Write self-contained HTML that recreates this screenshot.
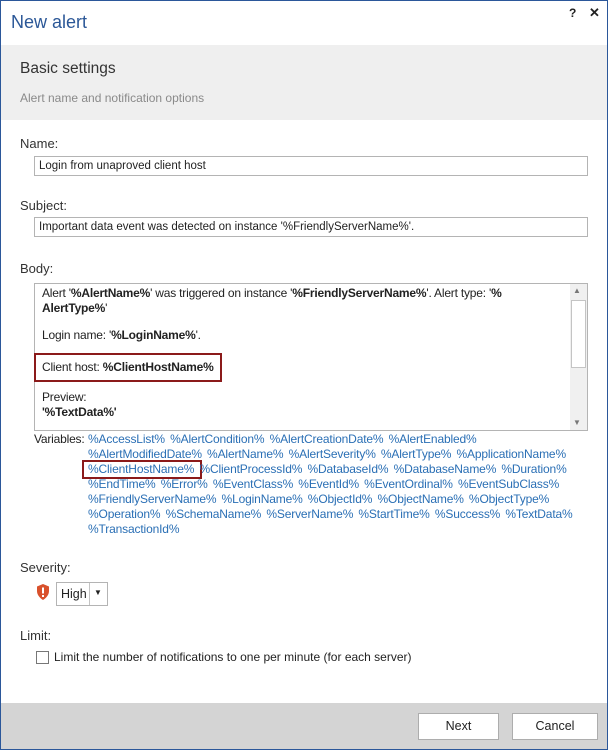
<!DOCTYPE html>
<html><head><meta charset="utf-8"><style>
*{margin:0;padding:0;box-sizing:border-box}
body{width:608px;height:750px;font-family:"Liberation Sans",sans-serif;font-size:12px;color:#222;background:#fff;position:relative;overflow:hidden}
.win{position:absolute;left:0;top:0;width:608px;height:750px;border:1px solid #2b579a}
.a{position:absolute;white-space:nowrap}
.lbl{font-size:13px;color:#333}
.inp{position:absolute;left:34px;width:554px;height:20px;border:1px solid #b4b4b4;padding:3px 4px;font-size:11.5px}
.lk{color:#2a6fb5}
.vl{position:absolute;left:88px;font-size:12px;letter-spacing:-0.15px;word-spacing:2px}
.bt{font-size:12px;letter-spacing:-0.2px}
.btn{position:absolute;top:713px;height:27px;border:1px solid #adadad;background:#fff;text-align:center;line-height:25px;font-size:12.5px}
</style></head><body>
<div class="win"></div>
<div class="a" style="left:11px;top:12px;font-size:18px;color:#2b5797">New alert</div>
<div class="a" style="left:569px;top:6px;font-size:12px;font-weight:bold">?</div>
<div class="a" style="left:589px;top:5px;font-size:13px;font-weight:bold">✕</div>
<div class="a" style="left:1px;top:45px;width:606px;height:75px;background:#efefef"></div>
<div class="a" style="left:20px;top:60px;font-size:15.5px;color:#333">Basic settings</div>
<div class="a" style="left:20px;top:91px;font-size:12px;color:#8a8a8a">Alert name and notification options</div>
<div class="a lbl" style="left:20px;top:136px">Name:</div>
<div class="inp" style="top:156px">Login from unaproved client host</div>
<div class="a lbl" style="left:20px;top:198px">Subject:</div>
<div class="inp" style="top:217px">Important data event was detected on instance '%FriendlyServerName%'.</div>
<div class="a lbl" style="left:20px;top:261px">Body:</div>
<div class="a" style="left:34px;top:283px;width:554px;height:148px;border:1px solid #b4b4b4"></div>
<div class="a" style="left:570px;top:284px;width:17px;height:146px;background:#f0f0f0"></div>
<div class="a" style="left:571px;top:300px;width:15px;height:68px;background:#fff;border:1px solid #c4c4c4"></div>
<div class="a" style="left:573px;top:286px;font-size:8px;color:#777">▲</div>
<div class="a" style="left:573px;top:418px;font-size:8px;color:#777">▼</div>
<div class="a bt" style="left:42px;top:286px;line-height:15px">Alert '<b>%AlertName%</b>' was triggered on instance '<b>%FriendlyServerName%</b>'. Alert type: '<b>%</b><br><b>AlertType%</b>'</div>
<div class="a bt" style="left:42px;top:328px">Login name: '<b>%LoginName%</b>'.</div>
<div class="a" style="left:34px;top:353px;width:188px;height:29px;border:2px solid #8b1a1a"></div>
<div class="a bt" style="left:42px;top:360px">Client host: <b>%ClientHostName%</b></div>
<div class="a bt" style="left:42px;top:390px;line-height:15px">Preview:<br><b>'%TextData%'</b></div>
<div class="a" style="left:34px;top:432px;font-size:12px;letter-spacing:-0.2px">Variables:</div>
<div class="vl lk" style="top:432px">%AccessList% %AlertCondition% %AlertCreationDate% %AlertEnabled%</div>
<div class="vl lk" style="top:447px">%AlertModifiedDate% %AlertName% %AlertSeverity% %AlertType% %ApplicationName%</div>
<div class="a" style="left:82px;top:460px;width:120px;height:19px;border:2px solid #8b1a1a"></div>
<div class="vl lk" style="top:462px">%ClientHostName% %ClientProcessId% %DatabaseId% %DatabaseName% %Duration%</div>
<div class="vl lk" style="top:477px">%EndTime% %Error% %EventClass% %EventId% %EventOrdinal% %EventSubClass%</div>
<div class="vl lk" style="top:492px">%FriendlyServerName% %LoginName% %ObjectId% %ObjectName% %ObjectType%</div>
<div class="vl lk" style="top:507px">%Operation% %SchemaName% %ServerName% %StartTime% %Success% %TextData%</div>
<div class="vl lk" style="top:522px">%TransactionId%</div>
<div class="a lbl" style="left:20px;top:560px">Severity:</div>
<svg class="a" style="left:36px;top:584px" width="14" height="16" viewBox="0 0 14 16"><path d="M7 0 L13 2.5 V7 C13 11 10 14 7 16 C4 14 1 11 1 7 V2.5Z" fill="#d9512c"/><rect x="6" y="3.5" width="2" height="6" fill="#fff"/><rect x="6" y="11" width="2" height="2" fill="#fff"/></svg>
<div class="a" style="left:56px;top:582px;width:52px;height:24px;border:1px solid #b4b4b4"></div>
<div class="a" style="left:89px;top:583px;width:1px;height:22px;background:#c4c4c4"></div>
<div class="a" style="left:61px;top:587px;font-size:12.5px">High</div>
<div class="a" style="left:94px;top:588px;font-size:8px">▼</div>
<div class="a lbl" style="left:20px;top:628px">Limit:</div>
<div class="a" style="left:36px;top:651px;width:13px;height:13px;border:1px solid #777"></div>
<div class="a" style="left:54px;top:650px;font-size:12px">Limit the number of notifications to one per minute (for each server)</div>
<div class="a" style="left:1px;top:703px;width:606px;height:46px;background:#d4d4d4"></div>
<div class="btn" style="left:418px;width:81px">Next</div>
<div class="btn" style="left:512px;width:86px">Cancel</div>
</body></html>
